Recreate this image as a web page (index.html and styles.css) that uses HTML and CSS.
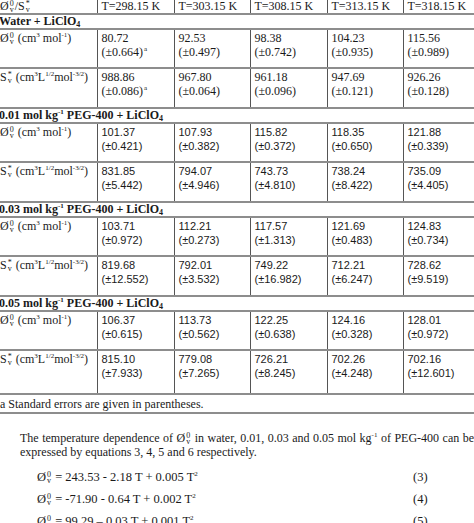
FILE: index.html
```html
<!DOCTYPE html>
<html>
<head>
<meta charset="utf-8">
<link rel="stylesheet" href="styles.css">
</head>
<body>
<div class="page">
<table class="tbl">
  <colgroup>
    <col class="c0"><col class="c1"><col class="c2"><col class="c3"><col class="c4"><col class="c5">
  </colgroup>
  <tr class="head">
    <td class="lab">Ø<span class="ss"><span class="hi">0</span><span class="lo">v</span></span>/S<span class="ss"><span class="hi">*</span><span class="lo">v</span></span></td>
    <td>T=298.15 K</td><td>T=303.15 K</td><td>T=308.15 K</td><td>T=313.15 K</td><td>T=318.15 K</td>
  </tr>
  <tr class="grp"><td colspan="6">Water + LiClO<span class="ion">4</span></td></tr>
  <tr class="phi serifv">
    <td class="lab">Ø<span class="ss"><span class="hi">0</span><span class="lo">v</span></span> (cm<span class="u">3</span> mol<span class="u">-1</span>)</td>
    <td>80.72<br>(±0.664)<span class="fn">a</span></td><td>92.53<br>(±0.497)</td><td>98.38<br>(±0.742)</td><td>104.23<br>(±0.935)</td><td>115.56<br>(±0.989)</td>
  </tr>
  <tr class="sv serifv">
    <td class="lab">S<span class="ss"><span class="hi">*</span><span class="lo">v</span></span> (cm<span class="u">3</span>L<span class="u">1/2</span>mol<span class="u">-3/2</span>)</td>
    <td>988.86<br>(±0.086)<span class="fn">a</span></td><td>967.80<br>(±0.064)</td><td>961.18<br>(±0.096)</td><td>947.69<br>(±0.121)</td><td>926.26<br>(±0.128)</td>
  </tr>
  <tr class="grp"><td colspan="6">0.01 mol kg<span class="u">-1</span> PEG-400 + LiClO<span class="ion">4</span></td></tr>
  <tr class="phi">
    <td class="lab">Ø<span class="ss"><span class="hi">0</span><span class="lo">v</span></span> (cm<span class="u">3</span> mol<span class="u">-1</span>)</td>
    <td>101.37<br>(±0.421)</td><td>107.93<br>(±0.382)</td><td>115.82<br>(±0.372)</td><td>118.35<br>(±0.650)</td><td>121.88<br>(±0.339)</td>
  </tr>
  <tr class="sv">
    <td class="lab">S<span class="ss"><span class="hi">*</span><span class="lo">v</span></span> (cm<span class="u">3</span>L<span class="u">1/2</span>mol<span class="u">-3/2</span>)</td>
    <td>831.85<br>(±5.442)</td><td>794.07<br>(±4.946)</td><td>743.73<br>(±4.810)</td><td>738.24<br>(±8.422)</td><td>735.09<br>(±4.405)</td>
  </tr>
  <tr class="grp"><td colspan="6">0.03 mol kg<span class="u">-1</span> PEG-400 + LiClO<span class="ion">4</span></td></tr>
  <tr class="phi">
    <td class="lab">Ø<span class="ss"><span class="hi">0</span><span class="lo">v</span></span> (cm<span class="u">3</span> mol<span class="u">-1</span>)</td>
    <td>103.71<br>(±0.972)</td><td>112.21<br>(±0.273)</td><td>117.57<br>(±1.313)</td><td>121.69<br>(±0.483)</td><td>124.83<br>(±0.734)</td>
  </tr>
  <tr class="sv">
    <td class="lab">S<span class="ss"><span class="hi">*</span><span class="lo">v</span></span> (cm<span class="u">3</span>L<span class="u">1/2</span>mol<span class="u">-3/2</span>)</td>
    <td>819.68<br>(±12.552)</td><td>792.01<br>(±3.532)</td><td>749.22<br>(±16.982)</td><td>712.21<br>(±6.247)</td><td>728.62<br>(±9.519)</td>
  </tr>
  <tr class="grp"><td colspan="6">0.05 mol kg<span class="u">-1</span> PEG-400 + LiClO<span class="ion">4</span></td></tr>
  <tr class="phi">
    <td class="lab">Ø<span class="ss"><span class="hi">0</span><span class="lo">v</span></span> (cm<span class="u">3</span> mol<span class="u">-1</span>)</td>
    <td>106.37<br>(±0.615)</td><td>113.73<br>(±0.562)</td><td>122.25<br>(±0.638)</td><td>124.16<br>(±0.328)</td><td>128.01<br>(±0.972)</td>
  </tr>
  <tr class="sv last">
    <td class="lab">S<span class="ss"><span class="hi">*</span><span class="lo">v</span></span> (cm<span class="u">3</span>L<span class="u">1/2</span>mol<span class="u">-3/2</span>)</td>
    <td>815.10<br>(±7.933)</td><td>779.08<br>(±7.265)</td><td>726.21<br>(±8.245)</td><td>702.26<br>(±4.248)</td><td>702.16<br>(±12.601)</td>
  </tr>
  <tr class="foot"><td colspan="6">a Standard errors are given in parentheses.</td></tr>
</table>

<p class="para">The temperature dependence of Ø<span class="ss"><span class="hi">0</span><span class="lo">v</span></span> in water, 0.01, 0.03 and 0.05 mol kg<span class="u">-1</span> of PEG-400 can be expressed by equations 3, 4, 5 and 6 respectively.</p>

<div class="eqs">
  <div class="eq"><span class="lhs">Ø<span class="ss"><span class="hi">0</span><span class="lo">v</span></span> = 243.53 - 2.18 T + 0.005 T<span class="u">2</span></span><span class="num">(3)</span></div>
  <div class="eq"><span class="lhs">Ø<span class="ss"><span class="hi">0</span><span class="lo">v</span></span> = -71.90 - 0.64 T + 0.002 T<span class="u">2</span></span><span class="num">(4)</span></div>
  <div class="eq"><span class="lhs">Ø<span class="ss"><span class="hi">0</span><span class="lo">v</span></span> = 99.29 – 0.03 T + 0.001 T<span class="u">2</span></span><span class="num">(5)</span></div>
</div>
</div>
</body>
</html>
```

FILE: styles.css
```css
html, body {
  margin: 0;
  padding: 0;
  background: #fff;
}
body {
  font-family: "Liberation Serif", "Times New Roman", serif;
  color: #1a1a1a;
  width: 474px;
  height: 523px;
  overflow: hidden;
}
.page {
  width: 474px;
}
.tbl {
  border-collapse: collapse;
  table-layout: fixed;
  width: 478px;
  margin-left: -2px;
  font-size: 12px;
}
.c0 { width: 99px; }
.c1 { width: 77px; }
.c2 { width: 76px; }
.c3 { width: 77px; }
.c4 { width: 76px; }
.c5 { width: 73px; }

.tbl td {
  padding: 0 0 0 4px;
  vertical-align: top;
  line-height: 14px;
  border-bottom: 2px solid #8d8d8d;
  white-space: nowrap;
  overflow: hidden;
}
.tbl td + td {
  border-left: 1px solid #555;
}
.tbl td.lab {
  padding-left: 2px;
}
.head td {
  height: 13px;
  line-height: 13px;
  padding-top: 0;
}
.grp td {
  height: 12px;
  line-height: 13px;
  font-weight: bold;
  padding-left: 1px;
  padding-top: 0;
}
.phi td {
  height: 36px;
  padding-top: 1px;
}
.sv td {
  height: 37px;
  padding-top: 1px;
}
.sv.last td {
  height: 41px;
}
.phi td + td, .sv td + td {
  font-family: "Liberation Sans", Arial, sans-serif;
  font-size: 11px;
}
.serifv td + td {
  font-family: "Liberation Serif", "Times New Roman", serif;
  font-size: 12px;
}
.foot td {
  height: 14px;
  padding: 3px 0 0 2px;
  font-size: 12px;
  line-height: 13px;
}

.ss {
  display: inline-flex;
  flex-direction: column;
  vertical-align: 4px;
  height: 12px;
  line-height: 6px;
  font-size: 8px;
  margin-left: 1px;
  margin-right: 1px;
}
.hi, .lo {
  display: block;
  font-size: 8px;
  line-height: 6px;
  height: 6px;
}
.u {
  font-size: 7px;
  line-height: 0;
  vertical-align: 5px;
}
.fn {
  font-size: 7px;
  line-height: 0;
  vertical-align: 5px;
  margin-left: 1px;
}
.ion {
  font-size: 8px;
  line-height: 0;
  vertical-align: -2px;
}

.para {
  margin: 17px 0 0 20px;
  font-size: 12px;
  line-height: 14px;
  text-align: justify;
}
.eqs {
  margin: 11px 0 0 37px;
  font-size: 12.5px;
}
.eq {
  display: flex;
  height: 22px;
  line-height: 14px;
}
.lhs {
  width: 376px;
}
.num {
  width: 30px;
}
```
